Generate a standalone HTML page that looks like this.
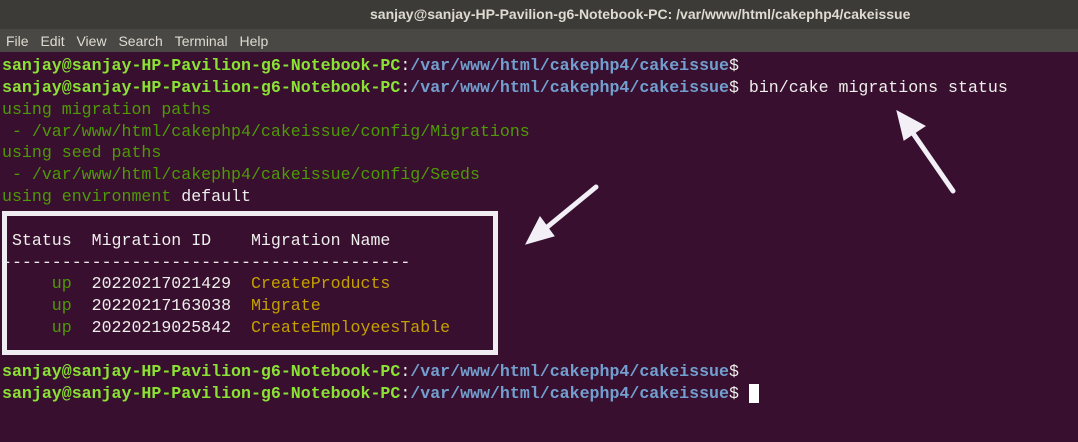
<!DOCTYPE html>
<html><head><style>
body{margin:0;width:1078px;height:442px;overflow:hidden;background:#380f2e;font-family:"Liberation Sans",sans-serif}
#title{position:absolute;left:0;top:0;width:1078px;height:29px;background:#3d3b37;color:#dfdbd2;font-size:14px;font-weight:bold;line-height:29px}
#title span{position:absolute;left:370px}
#menu{position:absolute;left:0;top:29px;width:1078px;height:23px;background:#4a4844;color:#dfdbd2;font-size:14px;line-height:24px}
#menu span{margin-left:6px;margin-right:2px}
#term{position:absolute;left:2px;top:55px;font-family:"Liberation Mono",monospace;font-size:16.6px;line-height:21.85px;white-space:pre;color:#eeeeec}
.u{color:#8ae234;font-weight:bold}.p{color:#729fcf;font-weight:bold}.g{color:#4e9a06}.o{color:#c4a000}
#box{position:absolute;left:2px;top:211px;width:486px;height:134px;border:5px solid #efedf2}
</style></head><body>
<div id="title"><span>sanjay@sanjay-HP-Pavilion-g6-Notebook-PC: /var/www/html/cakephp4/cakeissue</span></div>
<div id="menu"><span>File</span> <span>Edit</span> <span>View</span> <span>Search</span> <span>Terminal</span> <span>Help</span></div>
<div id="term"><span class="u">sanjay@sanjay-HP-Pavilion-g6-Notebook-PC</span>:<span class="p">/var/www/html/cakephp4/cakeissue</span>$
<span class="u">sanjay@sanjay-HP-Pavilion-g6-Notebook-PC</span>:<span class="p">/var/www/html/cakephp4/cakeissue</span>$ bin/cake migrations status
<span class="g">using migration paths</span>
<span class="g"> - /var/www/html/cakephp4/cakeissue/config/Migrations</span>
<span class="g">using seed paths</span>
<span class="g"> - /var/www/html/cakephp4/cakeissue/config/Seeds</span>
<span class="g">using environment</span> default

 Status  Migration ID    Migration Name
-----------------------------------------
     <span class="g">up</span>  20220217021429  <span class="o">CreateProducts</span>
     <span class="g">up</span>  20220217163038  <span class="o">Migrate</span>
     <span class="g">up</span>  20220219025842  <span class="o">CreateEmployeesTable</span>

<span class="u">sanjay@sanjay-HP-Pavilion-g6-Notebook-PC</span>:<span class="p">/var/www/html/cakephp4/cakeissue</span>$
<span class="u">sanjay@sanjay-HP-Pavilion-g6-Notebook-PC</span>:<span class="p">/var/www/html/cakephp4/cakeissue</span>$ <span style="background:#fff"> </span></div>
<div id="box"></div>
<svg style="position:absolute;left:0;top:0" width="1078" height="442">
<g stroke="#f2f0f6" stroke-width="5" stroke-linecap="round" fill="#f2f0f6">
<line x1="953" y1="191" x2="908" y2="126"/>
<polygon points="897,111 925,126 904,140" stroke-width="1"/>
<line x1="596" y1="187" x2="540" y2="233"/>
<polygon points="526,244 540,217 554,236" stroke-width="1"/>
</g></svg>
</body></html>
